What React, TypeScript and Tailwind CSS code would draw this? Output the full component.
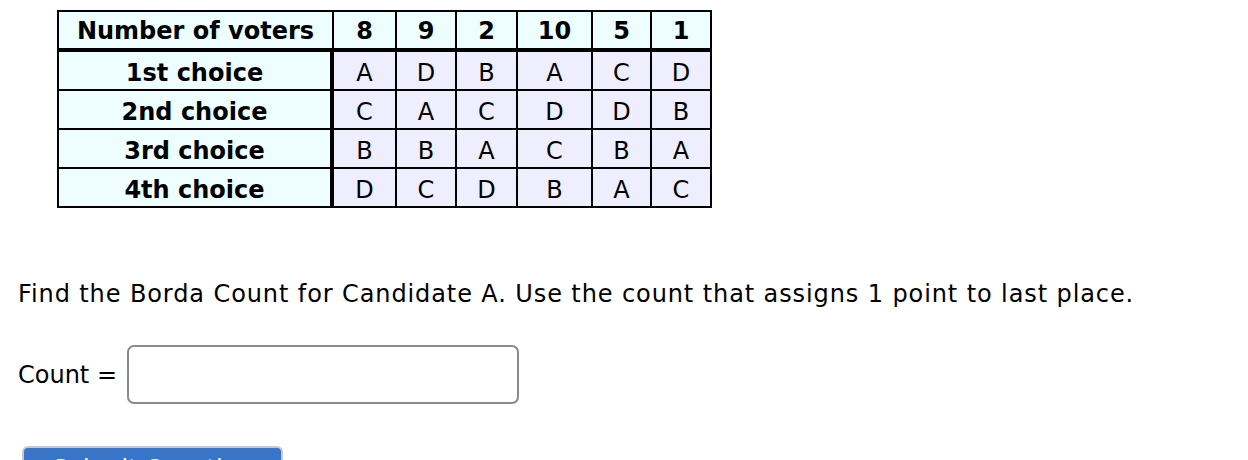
const header = ['8', '9', '2', '10', '5', '1'];
const rows = [
  { label: '1st choice', picks: ['A', 'D', 'B', 'A', 'C', 'D'] },
  { label: '2nd choice', picks: ['C', 'A', 'C', 'D', 'D', 'B'] },
  { label: '3rd choice', picks: ['B', 'B', 'A', 'C', 'B', 'A'] },
  { label: '4th choice', picks: ['D', 'C', 'D', 'B', 'A', 'C'] },
];

const widths = ['w-[63px]', 'w-[60px]', 'w-[61px]', 'w-[75px]', 'w-[59px]', 'w-[58px]'];

export default function App() {
  return (
    <div className="h-[460px] overflow-hidden bg-white text-black font-['DejaVu_Sans',sans-serif] text-[24px]">
      {/* Preference table */}
      <div className="pt-[10px] pl-[57px]">
        <div className="inline-flex flex-col border-t-2 border-l-2 border-r-2 border-black">
          <div className="flex h-[40px]">
            <div className="w-[275px] flex items-center justify-center pt-[2px] bg-[#eefeff] border-r-2 border-b-4 border-black font-bold">
              Number of voters
            </div>
            {header.map((n, i) => (
              <div
                key={i}
                className={`${widths[i]} flex items-center justify-center pt-[2px] bg-[#eefeff] border-b-4 border-black font-bold ${i < 5 ? 'border-r-2' : ''}`}
              >
                {n}
              </div>
            ))}
          </div>
          {rows.map((row) => (
            <div key={row.label} className="flex h-[39px]">
              <div className="w-[275px] flex items-center justify-center pt-[4px] bg-[#eefeff] border-r-4 border-b-2 border-black font-bold">
                {row.label}
              </div>
              {row.picks.map((p, i) => (
                <div
                  key={i}
                  className={`${widths[i]} flex items-center justify-center pt-[4px] bg-[#eeeeff] border-b-2 border-black ${i < 5 ? 'border-r-2' : ''}`}
                >
                  {p}
                </div>
              ))}
            </div>
          ))}
        </div>
      </div>

      <p className="pl-[18px] mt-[71px] leading-[30px] tracking-[0.9px] whitespace-nowrap">
        Find the Borda Count for Candidate A. Use the count that assigns 1 point to last place.
      </p>

      <div className="flex items-center pl-[18px] mt-[36px]">
        <span className="mr-[10px] whitespace-nowrap">Count =</span>
        <input
          type="text"
          className="w-[392px] h-[59px] border-2 border-[#8a8a8a] rounded-[7px] bg-white outline-none px-2"
        />
      </div>

      <button className="block ml-[22px] mt-[42px] w-[261px] h-[46px] rounded-[6px] border-2 border-[#c9c9c9] bg-[#3874c8] text-white text-[24px] leading-[40px]">
        Submit Question
      </button>
    </div>
  );
}
